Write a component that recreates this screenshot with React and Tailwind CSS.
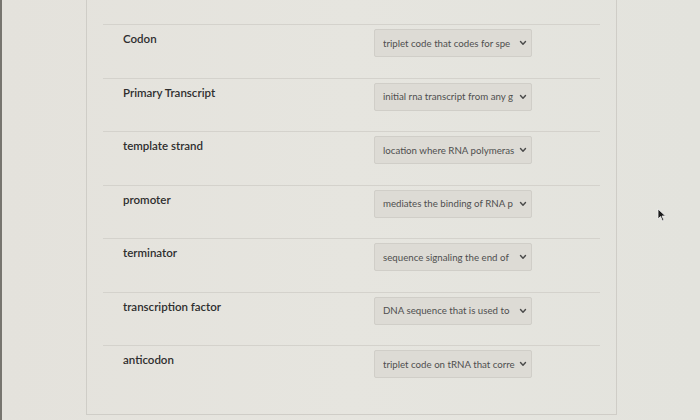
import React from "react";

const rows = [
  ["Codon", "triplet code that codes for spe"],
  ["Primary Transcript", "initial rna transcript from any g"],
  ["template strand", "location where RNA polymeras"],
  ["promoter", "mediates the binding of RNA p"],
  ["terminator", "sequence signaling the end of"],
  ["transcription factor", "DNA sequence that is used to"],
  ["anticodon", "triplet code on tRNA that corre"],
];

function Chevron() {
  return (
    <svg width="8" height="6" viewBox="0 0 8 6" className="shrink-0">
      <path d="M1.5 1.5 L4 4.3 L6.5 1.5" fill="none" stroke="#4a4a4a" strokeWidth="1.4" strokeLinecap="round" strokeLinejoin="round" />
    </svg>
  );
}

export default function App() {
  return (
    <div
      className="relative w-[700px] h-[420px] overflow-hidden bg-gradient-to-r from-[#e4e2dc] via-[#e6e5df] to-[#e3e3dd]"
      style={{ fontFamily: "Lato, 'Open Sans', sans-serif" }}
    >
      <div className="absolute left-0 top-0 h-full w-[2px] bg-[#77756f]" />
      <div className="ml-[86px] mt-[-10px] w-[531px] h-[425px] border border-[#cfcdc7] pt-[33px] pl-[16px] pr-[16px]">
        {rows.map(([label, value], i) => (
          <div key={i} className="h-[53.5px] border-t border-[#d4d2cc] flex">
            <div className="w-[271px] pl-[20px] pt-[6px] text-[11.5px] font-semibold text-[#2e2e2e] leading-[16px]">
              {label}
            </div>
            <div className="pt-[4px]">
              <div className="w-[158px] h-[28px] rounded-[2px] border border-[#d0cec8] bg-[#dddbd5] flex items-center pl-[8px] pr-[4px]">
                <span className="flex-1 overflow-hidden whitespace-nowrap text-[9.7px] text-[#4f4f4f]">
                  {value}
                </span>
                <span className="ml-[2px]"><Chevron /></span>
              </div>
            </div>
          </div>
        ))}
      </div>
      <svg className="absolute left-[657px] top-[208px]" width="10" height="14" viewBox="0 0 10 14">
        <path d="M1 1 L1 11 L3.5 8.5 L5.5 13 L7 12.3 L5 8 L8.5 8 Z" fill="#1c1c1c" stroke="#f2f2f2" strokeWidth="0.8" />
      </svg>
    </div>
  );
}
